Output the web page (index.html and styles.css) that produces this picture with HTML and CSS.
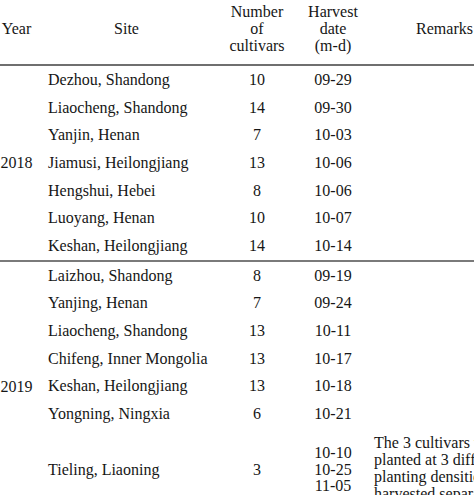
FILE: index.html
```html
<!DOCTYPE html>
<html>
<head>
<meta charset="utf-8">
<link rel="stylesheet" href="styles.css">
</head>
<body>
<div class="frame">
<table class="tbl">
  <colgroup>
    <col class="c-year"><col class="c-site"><col class="c-num"><col class="c-date"><col class="c-rem">
  </colgroup>
  <thead>
    <tr>
      <th>Year</th>
      <th>Site</th>
      <th>Number<br>of<br>cultivars</th>
      <th>Harvest<br>date<br>(m-d)</th>
      <th>Remarks</th>
    </tr>
  </thead>
  <tbody class="grp">
    <tr><td class="year" rowspan="7">2018</td><td class="site">Dezhou, Shandong</td><td>10</td><td>09-29</td><td></td></tr>
    <tr><td class="site">Liaocheng, Shandong</td><td>14</td><td>09-30</td><td></td></tr>
    <tr><td class="site">Yanjin, Henan</td><td>7</td><td>10-03</td><td></td></tr>
    <tr><td class="site">Jiamusi, Heilongjiang</td><td>13</td><td>10-06</td><td></td></tr>
    <tr><td class="site">Hengshui, Hebei</td><td>8</td><td>10-06</td><td></td></tr>
    <tr><td class="site">Luoyang, Henan</td><td>10</td><td>10-07</td><td></td></tr>
    <tr class="last"><td class="site">Keshan, Heilongjiang</td><td>14</td><td>10-14</td><td></td></tr>
  </tbody>
  <tbody>
    <tr><td class="year" rowspan="7">2019</td><td class="site">Laizhou, Shandong</td><td>8</td><td>09-19</td><td></td></tr>
    <tr><td class="site">Yanjing, Henan</td><td>7</td><td>09-24</td><td></td></tr>
    <tr><td class="site">Liaocheng, Shandong</td><td>13</td><td>10-11</td><td></td></tr>
    <tr><td class="site">Chifeng, Inner Mongolia</td><td>13</td><td>10-17</td><td></td></tr>
    <tr><td class="site">Keshan, Heilongjiang</td><td>13</td><td>10-18</td><td></td></tr>
    <tr><td class="site">Yongning, Ningxia</td><td>6</td><td>10-21</td><td></td></tr>
    <tr class="tall"><td class="site">Tieling, Liaoning</td><td>3</td><td class="dates">10-10<br>10-25<br>11-05</td><td class="remark">The 3 cultivars were planted at 3 different planting densities and harvested separately</td></tr>
  </tbody>
</table>
</div>
</body>
</html>
```

FILE: styles.css
```css
html, body {
  margin: 0;
  padding: 0;
  background: #fff;
  overflow: hidden;
  font-family: "Liberation Serif", "Times New Roman", serif;
}
.frame {
  width: 474px;
  height: 495px;
  overflow: hidden;
}
.tbl {
  border-collapse: collapse;
  table-layout: fixed;
  width: 517px;
  font-family: "Liberation Serif", "Times New Roman", serif;
  font-size: 16px;
  color: #161616;
}
.tbl th, .tbl td {
  font-family: "Liberation Serif", "Times New Roman", serif;
  font-size: 16px;
}
.c-year { width: 33px; }
.c-site { width: 187px; }
.c-num { width: 74px; }
.c-date { width: 78px; }
.c-rem { width: 145px; }

.tbl th {
  font-weight: normal;
  line-height: 17px;
  padding: 3px 0 10px;
  text-align: center;
  vertical-align: middle;
  border-bottom: 2px solid #6f6f6f;
}
.tbl td {
  height: 27.7px;
  padding: 0;
  text-align: center;
  vertical-align: middle;
  line-height: 18px;
  white-space: nowrap;
}
.tbl td.site {
  text-align: left;
  padding-left: 15px;
}
.grp .last td { border-bottom: 2px solid #7a7a7a; }
.grp td.year { border-bottom: 2px solid #7a7a7a; }
.tbl .tall { height: 84px; }
.tbl .tall td { height: auto; }
.tbl td.dates { line-height: 16.5px; }
.tbl td.remark {
  white-space: normal;
  text-align: left;
  vertical-align: top;
  line-height: 17px;
  padding: 6px 0 1px 2px;
}
```
